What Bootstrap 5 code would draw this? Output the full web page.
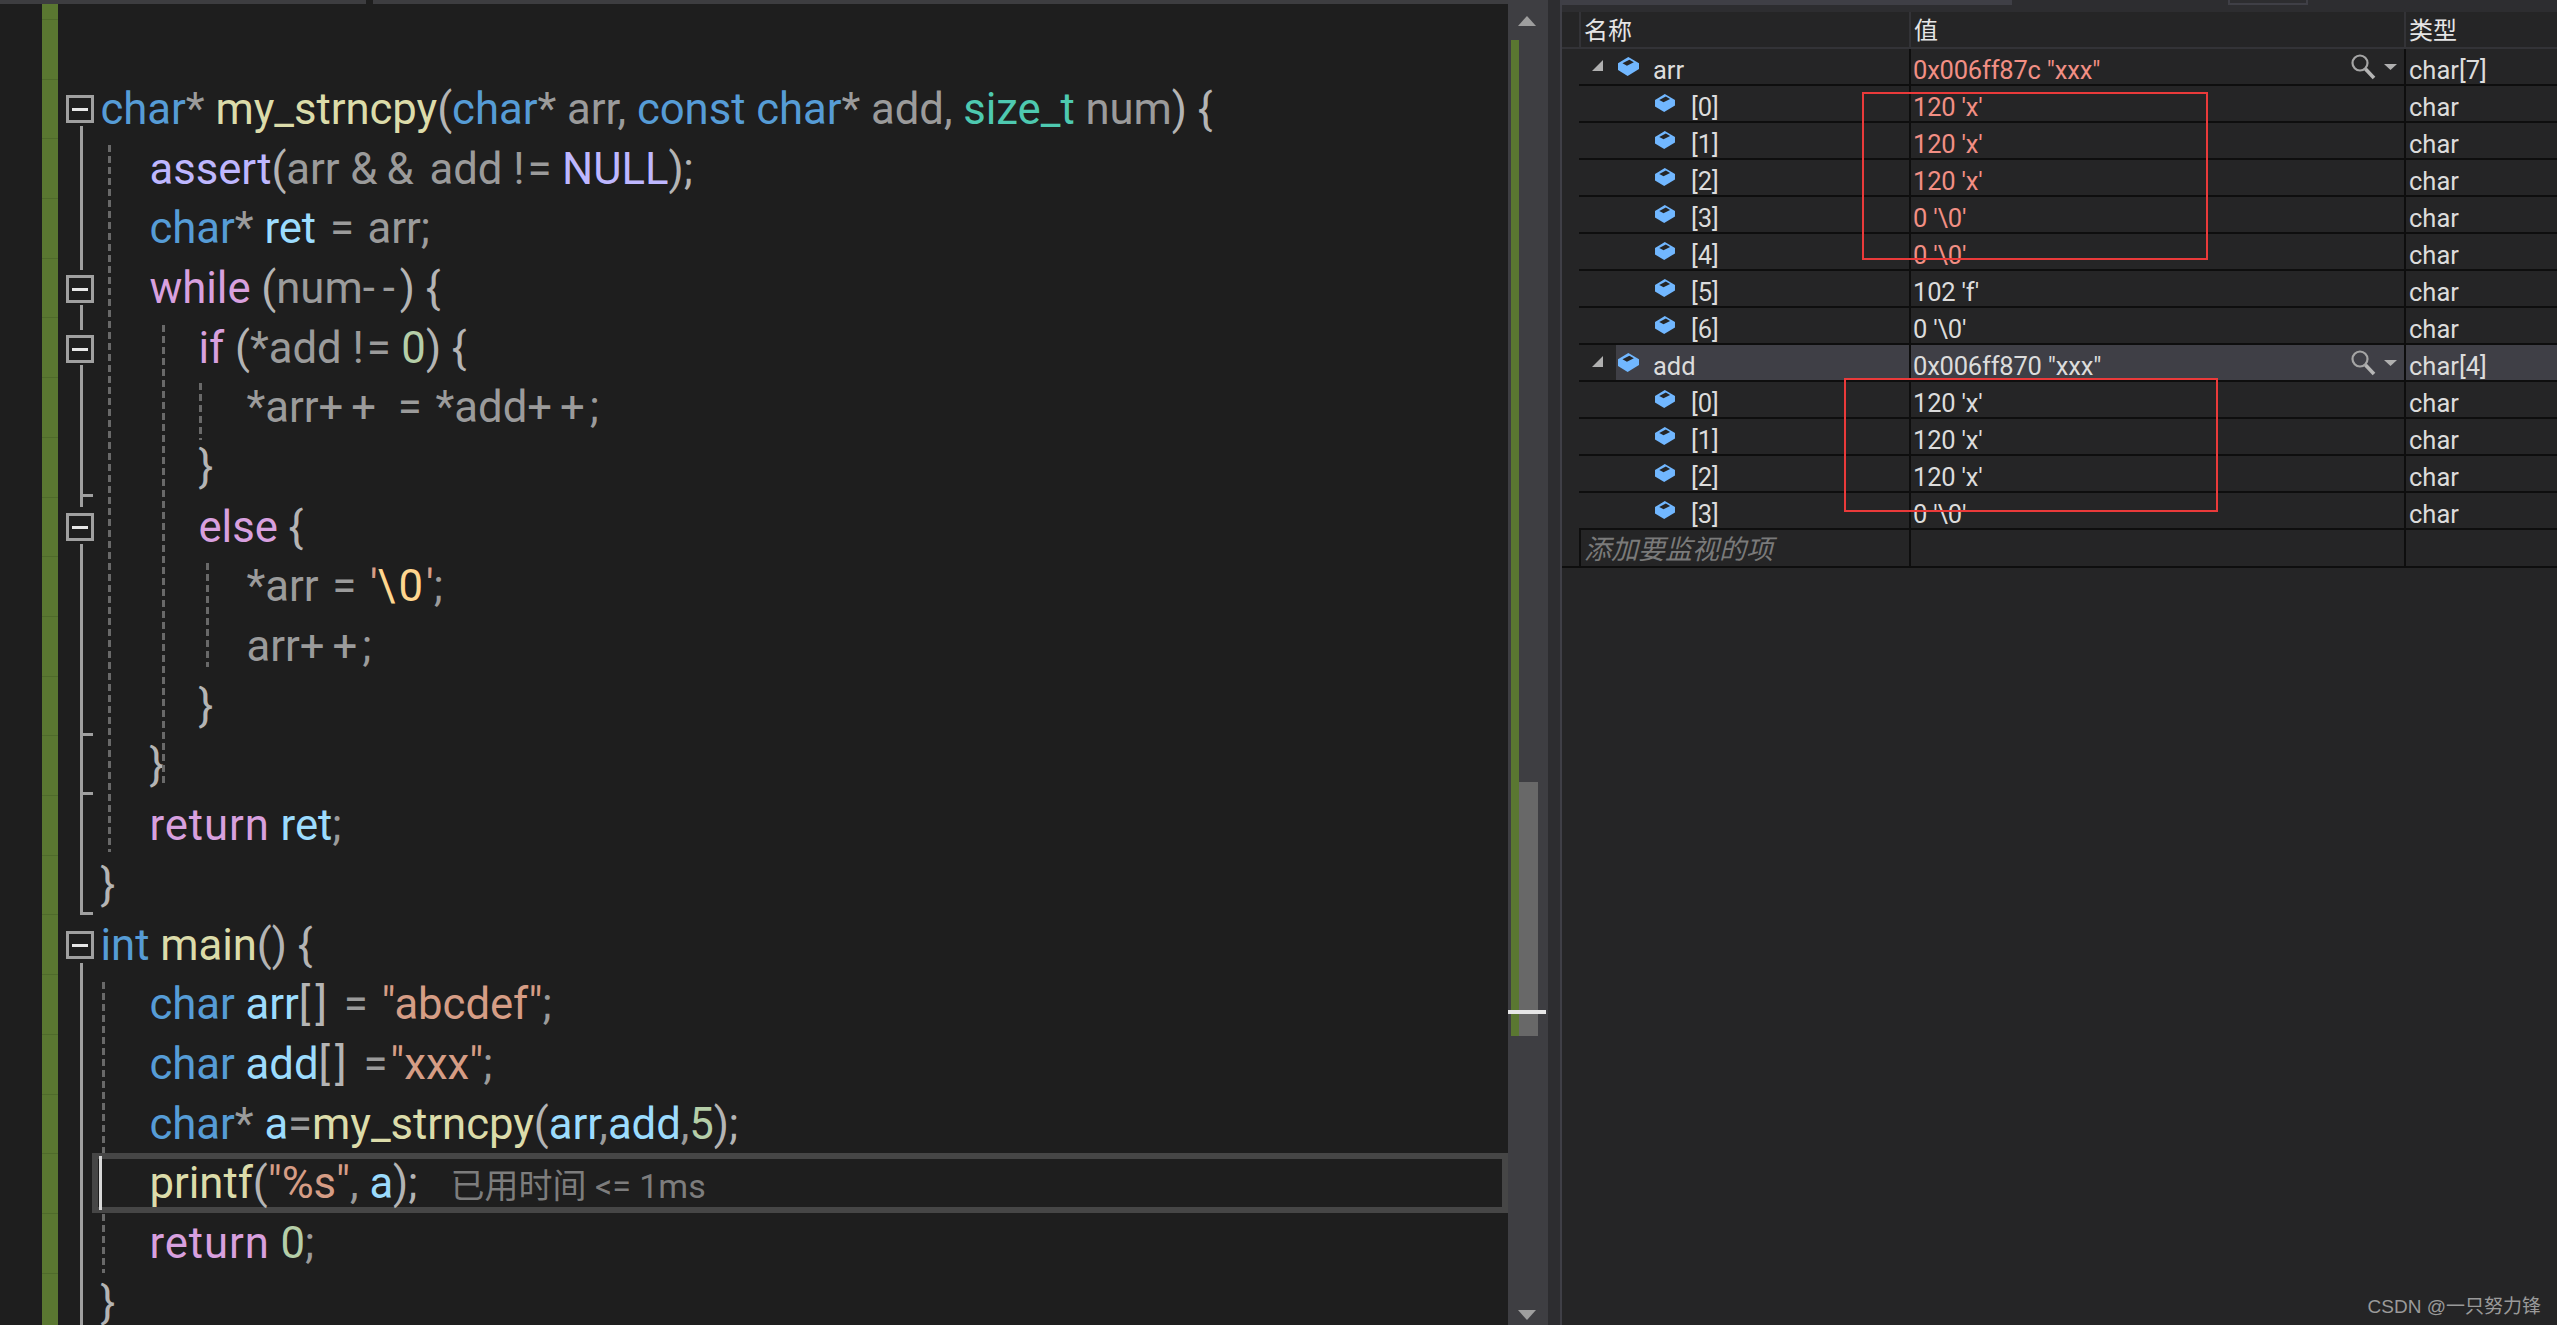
<!DOCTYPE html>
<html lang="zh"><head><meta charset="utf-8"><title>VS</title>
<link href="https://cdn.jsdelivr.net/npm/bootstrap@5.3.0/dist/css/bootstrap.min.css" rel="stylesheet">
<style>
html,body{height:100%;margin:0;overflow:hidden;background:#1e1e1e}
.vs-root{width:2557px;height:1325px;overflow:hidden}
.editor{width:1508px;height:1325px;background:#1e1e1e;overflow:hidden}
.topstrip{height:4px;background:#1e1e1e;gap:7px}
.topstrip>div{background:#3d3d40}
.seg1{width:366px}
.margincol{width:42px}
.greenbar{width:16px;background-color:#5a7731;background-image:repeating-linear-gradient(to bottom,#4f6a2b 0,#4f6a2b 1px,transparent 1px,transparent 59.7px);background-position:0 15px}
.gutter{width:42.5px}
.codecol{padding-top:16.2px;font-family:"Roboto","Noto Sans CJK SC",sans-serif;font-size:43.7px;letter-spacing:-.05px;color:#9b9b9b}
.ln{height:59.7px;line-height:59.7px;white-space:pre}
.lv1{padding-left:49px}.lv2{padding-left:98px}.lv3{padding-left:146px}
.kw{color:#569cd6}.fn{color:#dcdcaa}.mc{color:#beb7ff}.lc{color:#9cdcfe}.ct{color:#d8a0df}.nu{color:#b5cea8}.st{color:#d69d85}.ty{color:#4ec9b0}.es{color:#ffd68f;letter-spacing:3px}.pn{color:#b4b4b4}
.o1{letter-spacing:8px}.o2{letter-spacing:9px}.o3{letter-spacing:3px}.o4{letter-spacing:5px}
.ga1{margin-right:5px}.ga2{margin-right:5px}
.eq{margin:0 3px}.eqw{margin:0 3px 0 6px}
.rt{letter-spacing:.9px}
.tip{color:#7d7d7d;font-size:34px;margin-left:33px;letter-spacing:0}
.curbox{position:absolute;left:-8.5px;right:0;top:-1.6px;height:60px;border:6px solid #464646}
.caret{position:absolute;left:1px;top:-3px;width:3px;height:54px;background:#d8d8d8}
.guides{position:absolute;left:0;top:0;pointer-events:none}
.scrollcol{width:40px;background:#3e3e42}
.sgreen{position:absolute;left:3px;top:40px;width:8px;height:996px;background:#5a7731}
.sthumb{position:absolute;left:11px;top:782px;width:19px;height:254px;background:#686868}
.stick{position:absolute;left:0;top:1010px;width:38px;height:4px;background:#e6e6e6}
.sup,.sdown{position:absolute;left:10px}
.sup{top:16px}.sdown{top:1310px}
.gapcol{width:12px;background:#2d2d30}
.splitline{width:2px;background:#3f3f46}
.watch{width:995px;background:#252526;font-family:"Roboto","Noto Sans CJK SC",sans-serif;font-size:25.5px;color:#dcdcdc;height:1325px}
.wtop{height:12px;background:#2d2d30}
.wtab{width:450px;height:5px;background:#3f3f46}
.wtab2{position:absolute;left:666px;top:0;width:80px;height:5px;border:2px solid #3f3f46;border-top:0}
.wgrid{display:grid;grid-template-columns:330px 495px 153px;margin-left:17px}
.whead{height:37px;line-height:39px;border-bottom:2px solid #333337;margin-left:0;padding-left:17px;font-size:24px;color:#e6e6e6}
.whead>div{border-left:2px solid #333337;padding-left:3px;height:35px}
.wrow{height:37px;line-height:42px;border-bottom:2px solid #0e0e0e;grid-template-rows:35px}
.wv{border-left:2px solid #0e0e0e;padding-left:2px;letter-spacing:-.2px}
.wt{border-left:2px solid #0e0e0e;padding-left:3px}
.red{color:#f28f84}
.nmcell{padding-left:37px}
.nm{flex:1 1 auto;padding-left:2px}
.sel .nm,.sel .wv,.sel .wt{background:#3f3f46}
.tri{position:absolute;left:13px;top:11px}
.boxi{margin-right:14px;margin-top:8px}
.child .nmcell{padding-left:76px}
.child .boxi{width:20px;height:18px;margin-right:16px}
.ttl{width:21px;height:19px}
.addwatch{color:#7a7a7a;font-style:italic;font-size:27px;padding-left:3px;letter-spacing:0}
.addrow{height:36px;line-height:40px;grid-template-rows:36px}
.addrow>div:first-child{border-left:2px solid #0e0e0e}
.wsep{height:2px;background:#0e0e0e}
.lens{margin-right:7px;margin-top:4px}
.rbox{position:absolute;border:2px solid #ea3a3a;pointer-events:none}
.rb1{left:300px;top:92px;width:346px;height:168px}
.rb2{left:282px;top:378px;width:374px;height:134px}
.wm{position:absolute;right:16px;bottom:4px;font-family:"Liberation Sans","Noto Sans CJK SC",sans-serif;font-size:19px;color:#9a9a9a}
</style></head><body>
<div class="d-flex vs-root">
 <div class="editor position-relative flex-shrink-0">
  <div class="topstrip d-flex"><div class="seg1"></div><div class="flex-grow-1"></div></div>
  <div class="d-flex">
   <div class="margincol"></div>
   <div class="greenbar flex-shrink-0"></div>
   <div class="gutter flex-shrink-0"></div>
   <div class="codecol flex-grow-1">
<div class="ln"></div>
<div class="ln"><span class="kw">char</span>* <span class="fn">my_strncpy</span><span class="pn">(</span><span class="kw">char</span>* arr, <span class="kw">const char</span>* add, <span class="ty">size_t</span> num<span class="pn">) {</span></div>
<div class="ln lv1"><span class="mc">assert</span><span class="pn">(</span>arr <span class="o2">&amp;</span>&amp;<span class="ga1"> </span>add <span class="o3">!</span>= <span class="mc">NULL</span><span class="pn">);</span></div>
<div class="ln lv1"><span class="kw">char</span>* <span class="lc">ret</span><span class="eq"> = </span>arr;</div>
<div class="ln lv1"><span class="ct">while</span> <span class="pn">(</span>num<span class="o1">-</span>-<span class="ga2"></span><span class="pn">) {</span></div>
<div class="ln lv2"><span class="ct">if</span> <span class="pn">(</span>*add <span class="o3">!</span>= <span class="nu">0</span><span class="pn">) {</span></div>
<div class="ln lv3">*arr<span class="o1">+</span>+<span class="ga2"></span><span class="eqw"> = </span>*add<span class="o1">+</span>+<span class="ga2"></span>;</div>
<div class="ln lv2 pn">}</div>
<div class="ln lv2"><span class="ct">else</span> <span class="pn">{</span></div>
<div class="ln lv3">*arr<span class="eq"> = </span><span class="st">'</span><span class="es">\0</span><span class="st">'</span>;</div>
<div class="ln lv3">arr<span class="o1">+</span>+<span class="ga2"></span>;</div>
<div class="ln lv2 pn">}</div>
<div class="ln lv1 pn">}</div>
<div class="ln lv1"><span class="ct rt">return</span> <span class="lc">ret</span>;</div>
<div class="ln pn">}</div>
<div class="ln"><span class="kw">int</span> <span class="fn">main</span><span class="pn">() {</span></div>
<div class="ln lv1"><span class="kw">char</span> <span class="lc">arr</span><span class="pn"><span class="o4">[</span>]</span><span class="eqw"> = </span><span class="st">"abcdef"</span>;</div>
<div class="ln lv1"><span class="kw">char</span> <span class="lc">add</span><span class="pn"><span class="o4">[</span>]</span><span class="eqw"> =</span><span class="st">"xxx"</span>;</div>
<div class="ln lv1"><span class="kw">char</span>* <span class="lc">a</span>=<span class="fn">my_strncpy</span><span class="pn">(</span><span class="lc">arr</span>,<span class="lc">add</span>,<span class="nu">5</span><span class="pn">);</span></div>
<div class="ln lv1 position-relative"><div class="curbox"><div class="caret"></div></div><span class="position-relative"><span class="fn">printf</span><span class="pn">(</span><span class="st">"%s"</span>, <span class="lc">a</span><span class="pn">);</span><span class="tip">已用时间 &lt;= 1ms</span></span></div>
<div class="ln lv1"><span class="ct rt">return</span> <span class="nu">0</span>;</div>
<div class="ln pn">}</div>
   </div>
  </div>
  <svg class="guides" width="230" height="1325" viewBox="0 0 230 1325" fill="none">
   <g stroke="#696969" stroke-width="3" stroke-dasharray="7 4">
    <path d="M109.5 145V852M163.5 325V785M200.5 383V440M207.5 563V667M103.5 982V1153M103.5 1214V1273"/>
   </g>
   <g stroke="#a0a0a0" stroke-width="3">
    <path d="M81.5 126V270M81.5 305V330M81.5 365V507M80 495.5H93M81.5 544V913M80 734.5H93M80 793.5H93M80 913.5H93M81.5 963V1325"/>
    <rect x="67.5" y="96.5" width="25" height="25"/><rect x="67.5" y="276.5" width="25" height="25"/><rect x="67.5" y="336.5" width="25" height="25"/><rect x="67.5" y="514.5" width="25" height="25"/><rect x="67.5" y="932.5" width="25" height="25"/>
   </g>
   <g stroke="#e6e6e6" stroke-width="3">
    <path d="M72 109.5H88M72 289.5H88M72 349.5H88M72 527.5H88M72 945.5H88"/>
   </g>
  </svg>
 </div>
 <div class="scrollcol position-relative flex-shrink-0">
  <svg class="sup" width="18" height="10" viewBox="0 0 18 10"><path d="M9 0L18 10H0Z" fill="#9e9e9e"/></svg>
  <div class="sgreen"></div><div class="sthumb"></div><div class="stick"></div>
  <svg class="sdown" width="18" height="10" viewBox="0 0 18 10"><path d="M0 0H18L9 10Z" fill="#9e9e9e"/></svg>
 </div>
 <div class="gapcol flex-shrink-0"></div>
 <div class="splitline flex-shrink-0"></div>
 <div class="watch position-relative flex-shrink-0">
  <div class="wtop"><div class="wtab"></div><div class="wtab2"></div></div>
  <div class="wgrid whead"><div>名称</div><div>值</div><div>类型</div></div>

  <div class="wgrid wrow"><div class="nmcell position-relative d-flex"><svg class="tri" width="11" height="11" viewBox="0 0 11 11"><path d="M11 0V11H0Z" fill="#b0b0b0"/></svg><div class="nm d-flex"><svg class="boxi ttl" viewBox="0 0 61 55"><use href="#bx"/></svg>arr</div></div><div class="wv red d-flex justify-content-between align-items-start">0x006ff87c "xxx"<svg class="lens" width="46" height="28" viewBox="0 0 46 28" fill="none"><circle cx="9" cy="10" r="7.5" stroke="#a5a5a5" stroke-width="2.2"/><path d="M14.5 16L23 25" stroke="#b5b5b5" stroke-width="3.6"/><path d="M33 11H46L39.5 17Z" fill="#b0b0b0"/></svg></div><div class="wt">char[7]</div></div>

  <div class="wgrid wrow child"><div class="nmcell d-flex"><svg class="boxi" viewBox="0 0 61 55"><use href="#bx"/></svg>[0]</div><div class="wv red">120 'x'</div><div class="wt">char</div></div>
  <div class="wgrid wrow child"><div class="nmcell d-flex"><svg class="boxi" viewBox="0 0 61 55"><use href="#bx"/></svg>[1]</div><div class="wv red">120 'x'</div><div class="wt">char</div></div>
  <div class="wgrid wrow child"><div class="nmcell d-flex"><svg class="boxi" viewBox="0 0 61 55"><use href="#bx"/></svg>[2]</div><div class="wv red">120 'x'</div><div class="wt">char</div></div>
  <div class="wgrid wrow child"><div class="nmcell d-flex"><svg class="boxi" viewBox="0 0 61 55"><use href="#bx"/></svg>[3]</div><div class="wv red">0 '\0'</div><div class="wt">char</div></div>
  <div class="wgrid wrow child"><div class="nmcell d-flex"><svg class="boxi" viewBox="0 0 61 55"><use href="#bx"/></svg>[4]</div><div class="wv red">0 '\0'</div><div class="wt">char</div></div>
  <div class="wgrid wrow child"><div class="nmcell d-flex"><svg class="boxi" viewBox="0 0 61 55"><use href="#bx"/></svg>[5]</div><div class="wv">102 'f'</div><div class="wt">char</div></div>
  <div class="wgrid wrow child"><div class="nmcell d-flex"><svg class="boxi" viewBox="0 0 61 55"><use href="#bx"/></svg>[6]</div><div class="wv">0 '\0'</div><div class="wt">char</div></div>

  <div class="wgrid wrow sel"><div class="nmcell position-relative d-flex"><svg class="tri" width="11" height="11" viewBox="0 0 11 11"><path d="M11 0V11H0Z" fill="#b0b0b0"/></svg><div class="nm d-flex"><svg class="boxi ttl" viewBox="0 0 61 55"><use href="#bx"/></svg>add</div></div><div class="wv d-flex justify-content-between align-items-start">0x006ff870 "xxx"<svg class="lens" width="46" height="28" viewBox="0 0 46 28" fill="none"><circle cx="9" cy="10" r="7.5" stroke="#a5a5a5" stroke-width="2.2"/><path d="M14.5 16L23 25" stroke="#b5b5b5" stroke-width="3.6"/><path d="M33 11H46L39.5 17Z" fill="#b0b0b0"/></svg></div><div class="wt">char[4]</div></div>

  <div class="wgrid wrow child"><div class="nmcell d-flex"><svg class="boxi" viewBox="0 0 61 55"><use href="#bx"/></svg>[0]</div><div class="wv">120 'x'</div><div class="wt">char</div></div>
  <div class="wgrid wrow child"><div class="nmcell d-flex"><svg class="boxi" viewBox="0 0 61 55"><use href="#bx"/></svg>[1]</div><div class="wv">120 'x'</div><div class="wt">char</div></div>
  <div class="wgrid wrow child"><div class="nmcell d-flex"><svg class="boxi" viewBox="0 0 61 55"><use href="#bx"/></svg>[2]</div><div class="wv">120 'x'</div><div class="wt">char</div></div>
  <div class="wgrid wrow child"><div class="nmcell d-flex"><svg class="boxi" viewBox="0 0 61 55"><use href="#bx"/></svg>[3]</div><div class="wv">0 '\0'</div><div class="wt">char</div></div>

  <div class="wgrid addrow"><div class="addwatch">添加要监视的项</div><div class="wv"></div><div class="wt"></div></div>
  <div class="wsep"></div>

  <div class="rbox rb1"></div><div class="rbox rb2"></div>
  <div class="wm">CSDN @一只努力锋</div>
 </div>
</div>
<svg width="0" height="0" class="position-absolute"><defs><g id="bx"><path d="M30 0L61 18V35L28 55L0 38V18Z" fill="#71b7ff"/><path d="M13 18L33 8L46 15L26 25Z" fill="#252526"/></g></defs></svg>
<script src="https://cdn.jsdelivr.net/npm/bootstrap@5.3.0/dist/js/bootstrap.bundle.min.js"></script>
</body></html>
